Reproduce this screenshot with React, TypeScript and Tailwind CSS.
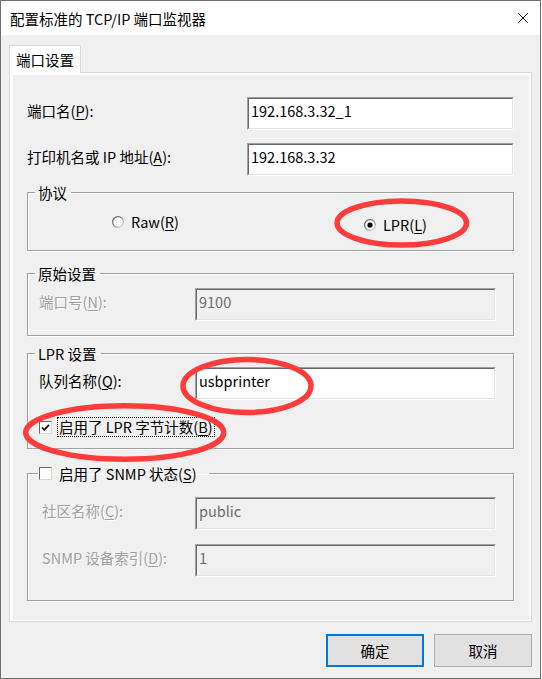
import React from "react";

const U = ({ c }: { c: string }) => (
  <u className="underline decoration-1 underline-offset-[2px]">{c}</u>
);

function Edit({ cls, value, disabled }: { cls: string; value: string; disabled?: boolean }) {
  return (
    <div
      className={`${cls} h-[33px] shrink-0 border border-t-[#a0a0a0] border-l-[#a0a0a0] border-b-white border-r-white`}
    >
      <div
        className={`h-full border border-t-[#696969] border-l-[#696969] border-b-[#e3e3e3] border-r-[#e3e3e3] pl-[2px] pt-[2px] leading-[20px] ${
          disabled ? "bg-[#f0f0f0] text-[#6d6d6d]" : "bg-white text-black"
        }`}
      >
        {value}
      </div>
    </div>
  );
}

function Radio({ checked, id }: { checked?: boolean; id: string }) {
  return (
    <svg width="12" height="12" viewBox="0 0 12 12" className="shrink-0">
      <defs>
        <linearGradient id={id} x1="0" y1="0" x2="1" y2="1">
          <stop offset="0" stopColor="#4a4a4a" />
          <stop offset="0.55" stopColor="#8a8a8a" />
          <stop offset="1" stopColor="#e8e8e8" />
        </linearGradient>
      </defs>
      <circle cx="6" cy="6" r="5.4" fill="#ffffff" stroke={`url(#${id})`} strokeWidth="1.2" />
      {checked && <circle cx="6" cy="6" r="2.6" fill="#000000" />}
    </svg>
  );
}

function Check({ checked }: { checked?: boolean }) {
  return (
    <div className="w-[13px] h-[13px] shrink-0 bg-white border border-t-[#696969] border-l-[#696969] border-b-[#d8d8d8] border-r-[#d8d8d8] flex items-center justify-center">
      {checked && (
        <svg width="11" height="11" viewBox="0 0 11 11">
          <polyline points="2,5.5 4.3,7.8 9,2.8" fill="none" stroke="#000" strokeWidth="1.7" />
        </svg>
      )}
    </div>
  );
}

const DIS = "text-[#a0a0a0] [text-shadow:1px_1px_0_#ffffff]";

export default function App() {
  return (
    <div className="relative w-[541px] h-[679px] border border-[#707070] bg-[#f0f0f0] flex flex-col font-['Noto_Sans_CJK_SC',sans-serif] text-[14.5px] leading-[20px] text-black">
      {/* Title bar */}
      <div className="h-[34px] shrink-0 bg-white flex items-center justify-between pl-[9px] pr-[12px] pt-[2px]">
        <span>配置标准的 TCP/IP 端口监视器</span>
        <svg width="10" height="10" viewBox="0 0 10 10" className="-mt-[2px]">
          <line x1="0.3" y1="0.3" x2="9.7" y2="9.7" stroke="#111" strokeWidth="1" />
          <line x1="9.7" y1="0.3" x2="0.3" y2="9.7" stroke="#111" strokeWidth="1" />
        </svg>
      </div>

      {/* Body */}
      <div className="flex flex-col px-[8px] pt-[10px]">
        {/* Tab */}
        <div className="relative z-10 -mb-px w-[72px] h-[28px] bg-white border border-b-0 border-[#d9d9d9] flex items-center pl-[6px]">
          端口设置
        </div>

        {/* Panel */}
        <div className="h-[550px] border border-[#d9d9d9] bg-white pl-[3px] pr-[2px] pt-[2px] pb-[1px]">
          <div className="h-full bg-[#f0f0f0] pl-[14px] pr-[15px] pt-[22px] flex flex-col">
            {/* Row 1 */}
            <div className="flex items-start">
              <div className="flex-1 pt-[4px]">
                端口名(<U c="P" />):
              </div>
              <Edit cls="w-[267px]" value="192.168.3.32_1" />
            </div>
            {/* Row 2 */}
            <div className="flex items-start mt-[13px]">
              <div className="flex-1 pt-[4px]">
                打印机名或 IP 地址(<U c="A" />):
              </div>
              <Edit cls="w-[267px]" value="192.168.3.32" />
            </div>

            {/* 协议 */}
            <fieldset className="mt-[6px] border border-[#a0a0a0] shadow-[inset_1px_1px_0_#fff,1px_1px_0_#fff]">
              <legend className="ml-[7px] pl-[3px] pr-[4px] h-[21px] leading-[21px]">协议</legend>
              <div className="flex items-start pl-[84px] pt-[9px] pb-[15px]">
                <div className="w-[252px] flex items-center gap-[7px]">
                  <Radio id="g-raw" />
                  <span>
                    Raw(<U c="R" />)
                  </span>
                </div>
                <div className="flex items-center gap-[7px] mt-[3px]">
                  <Radio id="g-lpr" checked />
                  <span>
                    LPR(<U c="L" />)
                  </span>
                </div>
              </div>
            </fieldset>

            {/* 原始设置 */}
            <fieldset className="mt-[12px] border border-[#a0a0a0] shadow-[inset_1px_1px_0_#fff,1px_1px_0_#fff]">
              <legend className="ml-[7px] pl-[3px] pr-[4px] h-[21px] leading-[21px]">原始设置</legend>
              <div className="flex items-start pl-[11px] pt-[4px] pb-[14px]">
                <div className={`w-[156px] pt-[4px] ${DIS}`}>
                  端口号(<U c="N" />):
                </div>
                <Edit cls="w-[301px]" value="9100" disabled />
              </div>
            </fieldset>

            {/* LPR 设置 */}
            <fieldset className="mt-[7px] border border-[#a0a0a0] shadow-[inset_1px_1px_0_#fff,1px_1px_0_#fff]">
              <legend className="ml-[7px] pl-[3px] pr-[4px] h-[21px] leading-[21px]">LPR 设置</legend>
              <div className="flex flex-col pl-[11px] pt-[3px] pb-[11px]">
                <div className="flex items-start">
                  <div className="w-[156px] pt-[4px]">
                    队列名称(<U c="Q" />):
                  </div>
                  <Edit cls="w-[301px]" value="usbprinter" />
                </div>
                <div className="flex items-center mt-[17px]">
                  <Check checked />
                  <span className="ml-[5px] h-[20px] leading-[18px] border border-dotted border-black px-[1px]">
                    启用了 LPR 字节计数(<U c="B" />)
                  </span>
                </div>
              </div>
            </fieldset>

            {/* SNMP */}
            <fieldset className="mt-[14px] border border-[#a0a0a0] shadow-[inset_1px_1px_0_#fff,1px_1px_0_#fff]">
              <legend className="ml-[10px] pl-[1px] pr-[12px] h-[21px] leading-[21px]">
                <span className="inline-flex items-center gap-[7px] h-[21px]">
                  <Check />
                  <span>
                    启用了 SNMP 状态(<U c="S" />)
                  </span>
                </span>
              </legend>
              <div className="flex flex-col pl-[14px] pt-[13px] pb-[23px]">
                <div className="flex items-start">
                  <div className={`w-[153px] pt-[4px] ${DIS}`}>
                    社区名称(<U c="C" />):
                  </div>
                  <Edit cls="w-[301px]" value="public" disabled />
                </div>
                <div className="flex items-start mt-[14px]">
                  <div className={`w-[153px] pt-[4px] ${DIS}`}>
                    SNMP 设备索引(<U c="D" />):
                  </div>
                  <Edit cls="w-[301px]" value="1" disabled />
                </div>
              </div>
            </fieldset>
          </div>
        </div>

        {/* Buttons */}
        <div className="mt-[12px] flex justify-end gap-[10px]">
          <button className="w-[98px] h-[33px] bg-[#e1e1e1] border-2 border-[#0078d7] flex items-center justify-center">
            确定
          </button>
          <button className="w-[98px] h-[33px] bg-[#e1e1e1] border border-[#adadad] flex items-center justify-center">
            取消
          </button>
        </div>
      </div>

      {/* Red annotation ellipses */}
      <svg
        className="absolute left-[-1px] top-[-1px] pointer-events-none"
        width="542"
        height="679"
        viewBox="0 0 542 679"
      >
        <ellipse cx="401.8" cy="223" rx="64.7" ry="22" fill="none" stroke="#ff3b3b" strokeWidth="5.5" />
        <ellipse cx="247" cy="386" rx="64" ry="26.5" fill="none" stroke="#ff3b3b" strokeWidth="5.5" />
        <ellipse cx="124.7" cy="432.5" rx="99" ry="26.7" fill="none" stroke="#ff3b3b" strokeWidth="5.5" />
      </svg>
    </div>
  );
}
